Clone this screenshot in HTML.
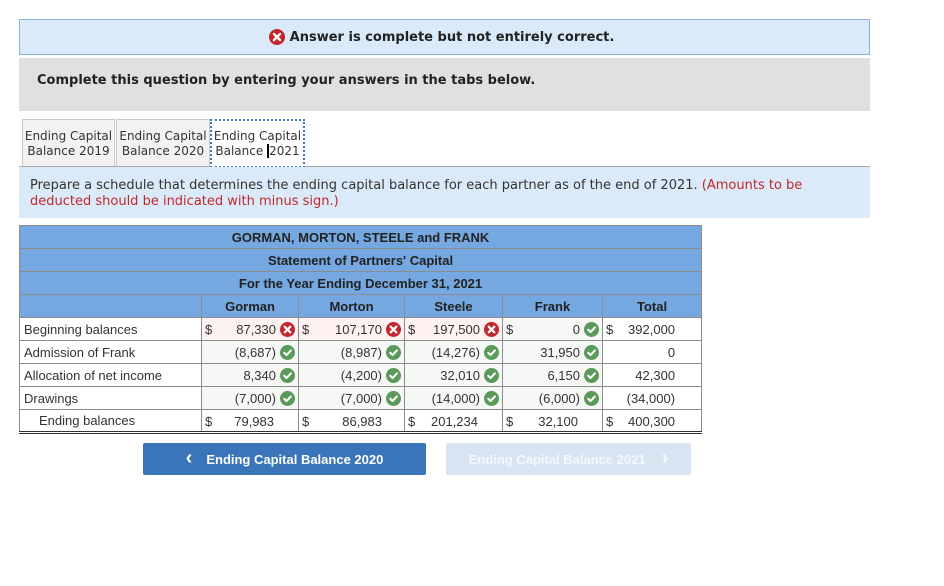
<!DOCTYPE html>
<html><head><meta charset="utf-8"><style>
*{margin:0;padding:0;box-sizing:border-box}
body{width:944px;height:586px;background:#fff;position:relative;font-family:"DejaVu Sans","Liberation Sans",sans-serif;color:#222;overflow:hidden}
.abs{position:absolute}
#top{left:19px;top:19px;width:851px;height:36px;background:#dbeaf8;border:1px solid #8ab4e0;font-size:13px;font-weight:bold;display:flex;align-items:center;justify-content:center;padding-left:14px}
#top svg{margin-right:5px;margin-left:-20px}
#gray{left:19px;top:58px;width:851px;height:53px;background:#e0e0e0;font-size:13px;font-weight:bold;padding:15px 0 0 18px}
.tab{top:119px;height:48px;background:#f2f2f2;border:1px solid #c8c8c8;border-bottom:none;font-size:12px;text-align:center;line-height:15px;padding-top:9px;color:#333}
#line{left:19px;top:166px;width:851px;height:1px;background:#aaa}
#inst{left:19px;top:167px;width:851px;height:51px;background:#dbeaf8;font-size:13px;padding:11px 0 0 11px;line-height:16px;color:#333}
table{position:absolute;left:19px;top:225px;border-collapse:collapse;font-family:"Liberation Sans",Arial,sans-serif;font-size:13px;table-layout:fixed;width:682px}
td{border:1px solid #8c8c8c;height:23px;position:relative;padding:0;color:#333}
.h td{background:#75a8e0;text-align:center;color:#222;font-weight:bold}
td.lab{padding-left:4px}
.d{position:absolute;left:3px;top:4px}
.v{position:absolute;right:22px;top:4px}
.vt{position:absolute;right:26px;top:4px}
.ic{position:absolute;right:3px;top:4px}
.x{background:#fdf1f1}
.c{background:#f5f8f5}
.end td{border-bottom:3px double #333}
.btn{top:443px;height:32px;border-radius:2px;font-family:"Liberation Sans",Arial,sans-serif;font-weight:bold;font-size:13px;color:#fff;display:flex;align-items:center;justify-content:center}
.btn b{font-size:20px;line-height:20px;margin-top:-3px}
</style></head><body>
<svg width="0" height="0" style="position:absolute"><defs>
<symbol id="ix" viewBox="0 0 16 16"><circle cx="8" cy="8" r="8" fill="#c1272d"/><path d="M5 5L11 11M11 5L5 11" stroke="#fff" stroke-width="2.4" stroke-linecap="round"/></symbol>
<symbol id="ic" viewBox="0 0 16 16"><circle cx="8" cy="8" r="8" fill="#5b9a5b"/><path d="M4.5 8.3L7 10.7L11.6 5.8" stroke="#fff" stroke-width="2.2" fill="none" stroke-linecap="round" stroke-linejoin="round"/></symbol>
</defs></svg>
<div id="top" class="abs"><svg width="16" height="16"><use href="#ix"/></svg>Answer is complete but not entirely correct.</div>
<div id="gray" class="abs">Complete this question by entering your answers in the tabs below.</div>
<div class="abs tab" style="left:22px;width:93px">Ending Capital<br>Balance 2019</div>
<div class="abs tab" style="left:116px;width:94px">Ending Capital<br>Balance 2020</div>
<div id="line" class="abs"></div>
<div class="abs tab" style="left:210px;width:95px;background:#fff;border:2px dotted #3a78c2;height:49px;padding-top:8px">Ending Capital<br>Balance <span style="border-left:2px solid #000">2021</span></div>
<div id="inst" class="abs">Prepare a schedule that determines the ending capital balance for each partner as of the end of 2021. <span style="color:#c0282e">(Amounts to be<br>deducted should be indicated with minus sign.)</span></div>
<table>
<colgroup><col style="width:182px"><col style="width:97px"><col style="width:106px"><col style="width:98px"><col style="width:100px"><col style="width:99px"></colgroup>
<tr class="h"><td colspan="6">GORMAN, MORTON, STEELE and FRANK</td></tr>
<tr class="h"><td colspan="6">Statement of Partners' Capital</td></tr>
<tr class="h"><td colspan="6">For the Year Ending December 31, 2021</td></tr>
<tr class="h"><td></td><td>Gorman</td><td>Morton</td><td>Steele</td><td>Frank</td><td>Total</td></tr>
<tr><td class="lab">Beginning balances</td>
<td class="x"><span class="d">$</span><span class="v">87,330</span><svg class="ic" width="15" height="15"><use href="#ix"/></svg></td>
<td class="x"><span class="d">$</span><span class="v">107,170</span><svg class="ic" width="15" height="15"><use href="#ix"/></svg></td>
<td class="x"><span class="d">$</span><span class="v">197,500</span><svg class="ic" width="15" height="15"><use href="#ix"/></svg></td>
<td class="c"><span class="d">$</span><span class="v">0</span><svg class="ic" width="15" height="15"><use href="#ic"/></svg></td>
<td><span class="d">$</span><span class="vt">392,000</span></td></tr>
<tr><td class="lab">Admission of Frank</td>
<td class="c"><span class="v">(8,687)</span><svg class="ic" width="15" height="15"><use href="#ic"/></svg></td>
<td class="c"><span class="v">(8,987)</span><svg class="ic" width="15" height="15"><use href="#ic"/></svg></td>
<td class="c"><span class="v">(14,276)</span><svg class="ic" width="15" height="15"><use href="#ic"/></svg></td>
<td class="c"><span class="v">31,950</span><svg class="ic" width="15" height="15"><use href="#ic"/></svg></td>
<td><span class="vt">0</span></td></tr>
<tr><td class="lab">Allocation of net income</td>
<td class="c"><span class="v">8,340</span><svg class="ic" width="15" height="15"><use href="#ic"/></svg></td>
<td class="c"><span class="v">(4,200)</span><svg class="ic" width="15" height="15"><use href="#ic"/></svg></td>
<td class="c"><span class="v">32,010</span><svg class="ic" width="15" height="15"><use href="#ic"/></svg></td>
<td class="c"><span class="v">6,150</span><svg class="ic" width="15" height="15"><use href="#ic"/></svg></td>
<td><span class="vt">42,300</span></td></tr>
<tr><td class="lab">Drawings</td>
<td class="c"><span class="v">(7,000)</span><svg class="ic" width="15" height="15"><use href="#ic"/></svg></td>
<td class="c"><span class="v">(7,000)</span><svg class="ic" width="15" height="15"><use href="#ic"/></svg></td>
<td class="c"><span class="v">(14,000)</span><svg class="ic" width="15" height="15"><use href="#ic"/></svg></td>
<td class="c"><span class="v">(6,000)</span><svg class="ic" width="15" height="15"><use href="#ic"/></svg></td>
<td><span class="vt">(34,000)</span></td></tr>
<tr class="end"><td class="lab" style="padding-left:19px">Ending balances</td>
<td><span class="d">$</span><span class="v" style="right:24px">79,983</span></td>
<td><span class="d">$</span><span class="v">86,983</span></td>
<td><span class="d">$</span><span class="v" style="right:24px">201,234</span></td>
<td><span class="d">$</span><span class="v" style="right:24px">32,100</span></td>
<td><span class="d">$</span><span class="vt">400,300</span></td></tr>
</table>
<div class="abs btn" style="left:143px;width:283px;background:#3a75b9"><b style="margin-right:14px">&#8249;</b>Ending Capital Balance 2020</div>
<div class="abs btn" style="left:446px;width:245px;background:#d9e4f2;color:#f4f7fb">Ending Capital Balance 2021<b style="margin-left:16px">&#8250;</b></div>
</body></html>
